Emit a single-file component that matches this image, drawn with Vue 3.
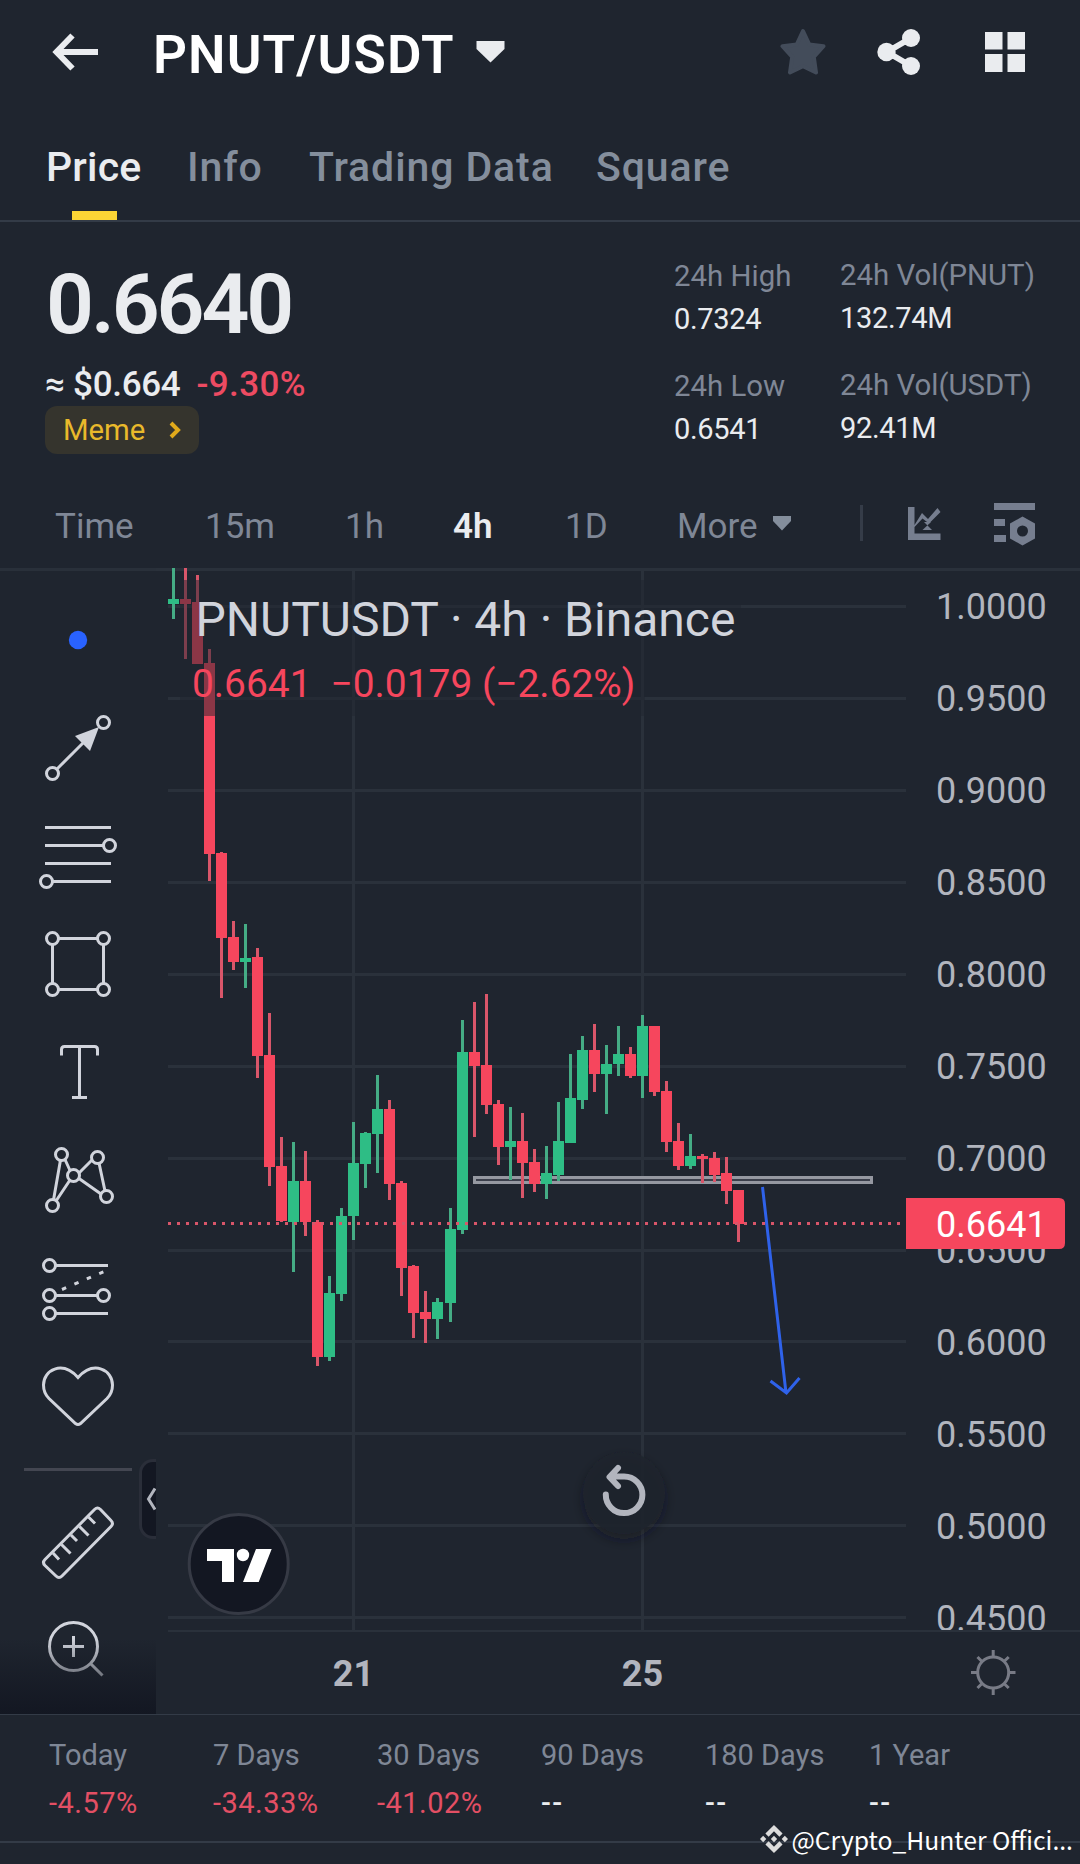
<template>
  <div class="page">
    <header class="header">
      <svg class="back" width="46" height="38" viewBox="0 0 46 38">
        <path d="M20.500 2.500L4.500 19L20.500 35.500M4 19H46" fill="none" stroke="#eaecef" stroke-width="6" />
      </svg>
      <h1 class="pair">PNUT/USDT</h1>
      <svg class="pair-caret" width="29" height="22" viewBox="0 0 29 22">
        <path d="M0.500 0H28.500V8L14.500 21.500L0.500 8Z" fill="#eaecef" />
      </svg>
      <div class="header-actions">
        <svg width="46" height="48" viewBox="0 0 46 48">
          <path
            d="M23 3L29.300 16.500L43.500 18.200L33.800 28.800L36 44.500L23 38.300L10 44.500L12.200 28.800L2.500 18.200L16.700 16.500Z"
            fill="#434c5a" stroke="#434c5a" stroke-width="4" stroke-linejoin="round"
          />
        </svg>
        <svg width="44" height="46" viewBox="0 0 44 46">
          <path d="M34 9L10 23L34 37" fill="none" stroke="#eaecef" stroke-width="6" />
          <circle cx="34" cy="9" r="9" fill="#eaecef" />
          <circle cx="9.500" cy="23" r="9.200" fill="#eaecef" />
          <circle cx="34" cy="37" r="9" fill="#eaecef" />
        </svg>
        <svg width="40" height="40" viewBox="0 0 40 40">
          <path d="M0 0H17.500V17.500H0ZM22.500 0H40V17.500H22.500ZM0 22H17.500V40H0ZM22.500 22H40V40H22.500Z" fill="#eaecef" />
        </svg>
      </div>
    </header>

    <nav class="tabs">
      <button
        v-for="tab in tabs"
        :key="tab"
        class="tab"
        :class="{ active: tab === activeTab }"
        @click="activeTab = tab"
      >
        {{ tab }}
      </button>
    </nav>

    <section class="quote">
      <div class="quote-main">
        <div class="last-price">0.6640</div>
        <div class="sub-price">
          <span class="fiat">≈ $0.664</span>
          <span class="change">-9.30%</span>
        </div>
        <div class="tag">
          Meme
          <svg width="12" height="18" viewBox="0 0 12 18">
            <path d="M2 2L9 9L2 16" fill="none" stroke="#e0a91b" stroke-width="4" />
          </svg>
        </div>
      </div>
      <div class="stats">
        <div v-for="stat in stats" :key="stat.label" class="stat">
          <div class="stat-label">{{ stat.label }}</div>
          <div class="stat-value">{{ stat.value }}</div>
        </div>
      </div>
    </section>

    <section class="intervals">
      <button
        v-for="item in intervals"
        :key="item"
        class="interval"
        :class="{ active: item === activeInterval }"
        @click="activeInterval = item"
      >
        {{ item }}
      </button>
      <div class="interval more">
        More
        <svg width="18" height="15" viewBox="0 0 18 15">
          <path d="M0 0H18V5L9 14.500L0 5Z" fill="#848e9c" />
        </svg>
      </div>
      <div class="divider"></div>
      <svg class="icon-chart" width="33" height="33" viewBox="0 0 33 33">
        <path d="M0 0H6.500V18L14 6L20 12L29.500 1L32.500 5L21 16.500L14.500 11.500L6.500 20V26.500H32.500V33H0Z" fill="#767e8f" />
        <path d="M16 15H23L14.500 23H24Z" fill="#767e8f" />
      </svg>
      <svg class="icon-config" width="41" height="43" viewBox="0 0 41 43">
        <path d="M0 0H41V7H0ZM0 16H11V23H0ZM0 32H12V39H0Z" fill="#767e8f" />
        <path
          d="M28.500 13.500L41 20.500V35.500L28.500 42.500L16 35.500V20.500ZM28.500 22.500A5.500 5.500 0 1 0 28.500 33.500A5.500 5.500 0 1 0 28.500 22.500Z"
          fill="#767e8f" fill-rule="evenodd"
        />
      </svg>
    </section>

    <section class="chart">
      <aside class="toolbar">
        <svg v-for="tool in tools" :key="tool.name" class="tool" viewBox="0 0 156 108">
          <circle v-if="tool.name === 'cursor'" cx="78" cy="54" r="9.200" fill="#2962ff" />
          <path v-if="tool.fill" :d="tool.fill" fill="#d1d4dc" />
          <path v-if="tool.path" :d="tool.path" class="stroke" />
          <path v-if="tool.dashed" :d="tool.dashed" class="stroke" stroke-dasharray="4.500 9" />
          <circle v-for="(dot, i) in tool.dots" :key="i" :cx="dot[0]" :cy="dot[1]" r="6" class="handle" />
        </svg>
        <div class="tool-separator"></div>
        <svg class="tool" viewBox="0 0 156 108">
          <path d="M94.500 20.500Q97.500 17.500 100.500 20.500L111 31.500Q114 34.500 111 37.500L62 87Q59 90 56 87L45 76.500Q42 73.500 45 70.500Z" class="stroke" />
          <path d="M53 64L59 70.500M61.500 55.500L70.500 64.500M71 46L77 52M79.500 37.500L88.500 46.500M88.500 28L95 34.500" class="stroke" />
        </svg>
        <svg class="tool" viewBox="0 0 156 108">
          <circle cx="73.500" cy="49.500" r="24" class="stroke" />
          <path d="M63 49.500H84M73.500 39V60M91 67L102.500 78.500" class="stroke" />
        </svg>
        <div class="toolbar-fade"></div>
        <div class="collapse">
          <svg width="13" height="24" viewBox="0 0 13 24">
            <path d="M12 1.500L5.500 12L12 22.500" fill="none" stroke="#b2b5be" stroke-width="3" />
          </svg>
        </div>
      </aside>

      <svg class="canvas" width="924" height="1146" viewBox="156 568 924 1146">
        <defs>
          <clipPath id="scale-clip"><rect x="906" y="568" width="174" height="1062" /></clipPath>
          <filter id="reset-shadow" x="-50%" y="-50%" width="200%" height="200%">
            <feDropShadow dx="0" dy="6" stdDeviation="6" flood-color="#10131c" flood-opacity="0.5" />
          </filter>
        </defs>

        <rect x="156" y="568" width="924" height="3" class="grid" />
        <rect v-for="row in priceRows" :key="row.label" x="168" :y="Math.round(row.y) - 1" width="738" height="3" class="grid" />
        <rect x="352" y="568" width="3" height="1063" class="grid" />
        <rect x="641" y="568" width="3" height="1063" class="grid" />
        <rect x="168" y="1630" width="912" height="2" class="grid" />

        <rect x="474.500" y="1177.500" width="397" height="5" fill="#3b3f4b" stroke="#9598a1" stroke-width="3" />

        <g v-for="(c, i) in candles" :key="i" :class="c[0]">
          <rect :x="candleX(i) + 4" :y="c[1]" width="3" :height="c[4] - c[1]" class="wick" />
          <rect :x="candleX(i)" :y="c[2]" width="11" :height="c[3] - c[2]" class="body" />
        </g>

        <path d="M168 1223.500H906" stroke="#d9566a" stroke-width="3" stroke-dasharray="3 6" />

        <path d="M762.500 1187L786 1393M770.500 1381L786.500 1393L799.500 1378" fill="none" stroke="#2f62ea" stroke-width="3" />

        <!-- legend sits on a translucent plate so candles stay visible -->
        <path d="M180 580H741V648H645V716H180Z" fill="#1f252f" fill-opacity="0.500" />
        <text x="195.500" y="636" class="legend-title">PNUTUSDT · 4h · Binance</text>
        <text x="192" y="697" class="legend-value">0.6641</text>
        <text x="330.500" y="697" class="legend-value">−0.0179 (−2.62%)</text>

        <circle cx="624" cy="1493" r="41" fill="#1f232e" fill-opacity="0.900" filter="url(#reset-shadow)" />
        <path
          d="M605.800 1494.500A18.300 18.300 0 1 0 624 1476.500H611M618 1468L609.500 1477L618 1486"
          fill="none" stroke="#b2b5be" stroke-width="6" stroke-linecap="round" stroke-linejoin="round"
        />

        <circle cx="238.700" cy="1564" r="49.500" fill="#131722" stroke="#363a45" stroke-width="3" />
        <path d="M207 1549H234V1582H222V1561H207ZM256 1549H271.700L258.700 1582H243Z" fill="#fff" />
        <circle cx="243" cy="1555" r="6.200" fill="#fff" />

        <g clip-path="url(#scale-clip)">
          <text v-for="row in priceRows" :key="row.label" x="936" :y="row.y + 13.4" class="scale">{{ row.label }}</text>
        </g>
        <path d="M906 1198H1059Q1065 1198 1065 1204V1243Q1065 1249 1059 1249H906Z" fill="#f6465d" />
        <text x="936" y="1237" class="scale current">0.6641</text>

        <text x="353.500" y="1686" class="scale date">21</text>
        <text x="642.500" y="1686" class="scale date">25</text>

        <g fill="none" stroke="#787b86" stroke-width="3">
          <circle cx="993.200" cy="1672.500" r="15.500" />
          <path d="M993.200 1657V1650M993.200 1688V1695M977.700 1672.500H971M1008.700 1672.500H1015.500M982 1661.500L977.500 1657M1004 1661.500L1008.700 1657M982 1683.500L977.500 1688M1004 1683.500L1008.700 1688" />
        </g>
      </svg>
    </section>

    <section class="performance">
      <div v-for="item in performance" :key="item.label" class="perf">
        <div class="perf-label">{{ item.label }}</div>
        <div class="perf-value" :class="item.value === '--' ? 'empty' : 'down'">{{ item.value }}</div>
      </div>
    </section>

    <div class="watermark">
      <svg width="28" height="28" viewBox="0 0 24 24">
        <path
          d="M16.624 13.920l2.718 2.716-7.353 7.353-7.353-7.352 2.718-2.717 4.635 4.660 4.636-4.660zM21.260 9.284L24 12l-2.715 2.716L18.568 12zM11.988 9.300l2.700 2.677-2.700 2.717L9.290 12zM2.716 9.284L5.409 12l-2.692 2.692L0 12zM11.988.012l7.353 7.329-2.717 2.715-4.636-4.636-4.635 4.660-2.718-2.716z"
          fill="#dcdcdc"
        />
      </svg>
      <span>@Crypto_Hunter Offici...</span>
    </div>
  </div>
</template>

<script setup>
import { ref } from 'vue'

const tabs = ['Price', 'Info', 'Trading Data', 'Square']
const activeTab = ref('Price')

const intervals = ['Time', '15m', '1h', '4h', '1D']
const activeInterval = ref('4h')

const stats = [
  { label: '24h High', value: '0.7324' },
  { label: '24h Vol(PNUT)', value: '132.74M' },
  { label: '24h Low', value: '0.6541' },
  { label: '24h Vol(USDT)', value: '92.41M' }
]

const performance = [
  { label: 'Today', value: '-4.57%' },
  { label: '7 Days', value: '-34.33%' },
  { label: '30 Days', value: '-41.02%' },
  { label: '90 Days', value: '--' },
  { label: '180 Days', value: '--' },
  { label: '1 Year', value: '--' }
]

const tools = [
  { name: 'cursor' },
  {
    name: 'trend',
    path: 'M57 75L84 48',
    fill: 'M99 33L75 42L90 57Z',
    dots: [[52.5, 79.5], [103.5, 28.5]]
  },
  {
    name: 'fib',
    path: 'M45 25.5H111M45 43.5H104M45 61.5H111M52 79.5H111',
    dots: [[109.5, 43.5], [46.5, 79.5]]
  },
  {
    name: 'shape',
    path: 'M58 28.5H98M58 79.5H98M52.5 34V74M103.5 34V74',
    dots: [[52.5, 28.5], [103.5, 28.5], [52.5, 79.5], [103.5, 79.5]]
  },
  {
    name: 'text',
    path: 'M61.5 37.5V31.5Q61.5 28.5 64.5 28.5H94.5Q97.5 28.5 97.5 31.5V37.5M79.500 28.5V79.5M72 79.5H87'
  },
  {
    name: 'pattern',
    path: 'M60.500 34L53.500 74M65 33.500L70 44.500M70 54L56 75M79 47L92 34M99 37L105 65M79 52.500L101 68',
    dots: [[61.5, 28.5], [97.5, 31.5], [73.5, 49.5], [52.5, 79.5], [106.5, 70.5]]
  },
  {
    name: 'forecast',
    path: 'M55 31.5H108M55 61.5H98M55 79.5H108',
    dashed: 'M62 55.500L104 37.500',
    dots: [[49.5, 31.5], [49.5, 61.5], [103.5, 61.5], [49.5, 79.5]]
  },
  {
    name: 'icons',
    path: 'M78 35.500C62 18 43.500 28 43.500 43C43.500 48.500 45 52.500 49 56.500L75.500 81.500Q78 83.500 80.500 81.500L107 56.500C111 52.500 112.500 48.500 112.500 43C112.500 28 94 18 78 35.500Z'
  }
]

// price scale, one label every 92px
const priceRows = Array.from({ length: 12 }, (_, i) => ({
  label: (1 - i * 0.05).toFixed(4),
  y: 606 + i * 91.93
}))

// direction, high, body top, body bottom, low
const candles = [
  ['up', 568, 599, 604, 619],
  ['down', 568, 599, 604, 659],
  ['down', 575, 602, 664, 664],
  ['down', 649, 663, 854, 881],
  ['down', 852, 853, 938, 998],
  ['down', 921, 937, 962, 970],
  ['up', 924, 958, 962, 988],
  ['down', 948, 957, 1056, 1078],
  ['down', 1013, 1055, 1167, 1186],
  ['down', 1137, 1166, 1221, 1222],
  ['up', 1142, 1181, 1222, 1272],
  ['down', 1151, 1181, 1222, 1236],
  ['down', 1220, 1222, 1357, 1366],
  ['up', 1276, 1293, 1357, 1361],
  ['up', 1208, 1216, 1294, 1301],
  ['up', 1122, 1163, 1216, 1240],
  ['up', 1132, 1133, 1164, 1188],
  ['up', 1075, 1109, 1134, 1173],
  ['down', 1100, 1109, 1184, 1200],
  ['down', 1181, 1183, 1268, 1296],
  ['down', 1265, 1266, 1313, 1338],
  ['down', 1291, 1312, 1319, 1343],
  ['up', 1298, 1302, 1319, 1339],
  ['up', 1208, 1229, 1303, 1322],
  ['up', 1020, 1052, 1230, 1234],
  ['down', 1002, 1052, 1066, 1137],
  ['down', 994, 1065, 1105, 1114],
  ['down', 1100, 1104, 1147, 1165],
  ['up', 1107, 1141, 1147, 1180],
  ['down', 1113, 1141, 1163, 1198],
  ['down', 1149, 1162, 1184, 1192],
  ['up', 1146, 1173, 1184, 1199],
  ['up', 1102, 1141, 1175, 1181],
  ['up', 1054, 1098, 1143, 1143],
  ['up', 1036, 1050, 1100, 1109],
  ['down', 1024, 1050, 1074, 1092],
  ['up', 1045, 1064, 1074, 1114],
  ['up', 1026, 1054, 1064, 1076],
  ['down', 1047, 1054, 1076, 1078],
  ['up', 1015, 1026, 1076, 1098],
  ['down', 1026, 1026, 1092, 1096],
  ['down', 1081, 1091, 1142, 1152],
  ['down', 1123, 1141, 1166, 1170],
  ['up', 1134, 1156, 1166, 1169],
  ['down', 1154, 1156, 1159, 1183],
  ['down', 1152, 1158, 1175, 1182],
  ['down', 1157, 1173, 1191, 1204],
  ['down', 1190, 1190, 1224, 1242]
]

const candleX = (i) => 168 + i * 12 + (i > 22 ? 1 : 0)
</script>

<style>
body {
  background: #1f252f;
}
</style>

<style scoped>
.page {
  position: relative;
  width: 1080px;
  height: 1864px;
  overflow: hidden;
  background: #1f252f;
  color: #eaecef;
  font-family: Roboto, "Liberation Sans", sans-serif;
}

svg {
  display: block;
  flex: none;
}

button {
  padding: 0;
  border: none;
  background: none;
  font: inherit;
  color: inherit;
  cursor: pointer;
}

.header {
  display: flex;
  align-items: center;
  height: 104px;
  padding: 0 55px 0 52px;
  box-sizing: border-box;
}

.pair {
  width: 323px;
  margin: 0;
  padding: 6px 0 0 55px;
  box-sizing: content-box;
  font-size: 53px;
  font-weight: 600;
  line-height: 60px;
  letter-spacing: 1.1px;
  color: #fff;
  white-space: nowrap;
}

.header-actions {
  display: flex;
  align-items: center;
  margin-left: auto;
}

.header-actions svg + svg {
  margin-left: 51px;
}

.header-actions svg:last-child {
  margin-left: 64px;
}

.tabs {
  display: grid;
  grid-template-columns: 141px 122px 287px auto;
  justify-items: start;
  height: 118px;
  padding: 0 46px;
  box-sizing: border-box;
  border-bottom: 2px solid #333b47;
}

.tab {
  position: relative;
  height: 116px;
  padding-top: 10px;
  font-size: 41px;
  font-weight: 500;
  letter-spacing: 0.9px;
  color: #848e9c;
  white-space: nowrap;
}

.tab.active {
  letter-spacing: 0.2px;
  color: #eaecef;
}

.tab.active::after {
  content: "";
  position: absolute;
  left: 50%;
  bottom: 0;
  width: 45px;
  height: 9px;
  margin-left: -22px;
  background: #fcd535;
}

.quote {
  display: flex;
  justify-content: space-between;
  height: 246px;
}

.quote-main {
  padding: 41px 0 0 45px;
}

.last-price {
  padding-left: 1px;
  font-size: 84px;
  font-weight: 600;
  line-height: 84px;
  letter-spacing: -3.1px;
}

.sub-price {
  display: flex;
  gap: 16px;
  height: 45px;
  margin-top: 14px;
  font-size: 35px;
  font-weight: 500;
  line-height: 47px;
}

.fiat {
  letter-spacing: -0.3px;
}

.change {
  letter-spacing: 0.4px;
  color: #ed4b62;
}

.tag {
  display: flex;
  align-items: center;
  justify-content: space-between;
  width: 154px;
  height: 48px;
  padding: 0 18px 0 18px;
  box-sizing: border-box;
  border-radius: 12px;
  background: #35342d;
  color: #e9b92b;
  font-size: 29.3px;
}

.stats {
  display: grid;
  grid-template-columns: 166px 240px;
  grid-auto-rows: 86px;
  row-gap: 24px;
  padding-top: 33px;
}

.stat:nth-child(even) {
  margin-top: -1px;
}

.stat-label,
.stat-value {
  font-size: 29.4px;
  line-height: 43px;
  white-space: nowrap;
}

.stat-label {
  color: #7f8796;
}

.stat-value {
  font-size: 29px;
  letter-spacing: -0.3px;
}

.intervals {
  display: grid;
  grid-template-columns: 150px 140px 108px 112px 112px 183px 48px 86px 1fr;
  align-items: center;
  height: 100px;
  padding: 0 0 0 55px;
}

.interval {
  padding-top: 16px;
  font-size: 35px;
  text-align: left;
  color: #7f8796;
}

.interval.active {
  color: #eaecef;
  font-weight: 600;
}

.more {
  display: flex;
  align-items: center;
  gap: 15px;
}

.more svg {
  margin-top: -6px;
}

.divider {
  width: 3px;
  height: 36px;
  margin-top: 10px;
  background: #353c48;
}

.icon-chart {
  margin-top: 10px;
}

.icon-config {
  margin-top: 13px;
}

.chart {
  display: flex;
  height: 1146px;
}

.toolbar {
  position: relative;
  width: 156px;
  padding-top: 15px;
  box-sizing: border-box;
  border-top: 3px solid #29303a;
}

.tool {
  width: 156px;
  height: 108px;
}

.stroke,
.handle {
  fill: none;
  stroke: #d1d4dc;
  stroke-width: 3px;
}

.tool-separator {
  width: 108px;
  height: 3px;
  margin: 18px 0 18px 24px;
  background: #434651;
}

.toolbar-fade {
  position: absolute;
  left: 0;
  bottom: 0;
  width: 156px;
  height: 76px;
  background: linear-gradient(rgba(19, 23, 34, 0), #131722);
}

.collapse {
  position: absolute;
  top: 888px;
  right: 0;
  display: flex;
  align-items: center;
  justify-content: flex-end;
  width: 17px;
  height: 80px;
  box-sizing: border-box;
  overflow: hidden;
  border: 3px solid #2a2e39;
  border-right: none;
  border-radius: 14px 0 0 14px;
  background: #131722;
}

.grid {
  fill: #2a313b;
}

.up .body {
  fill: #2ebd85;
}

.up .wick {
  fill: #45ac85;
}

.down .body {
  fill: #f6465d;
}

.down .wick {
  fill: #d9566a;
}

.legend-title {
  font-size: 48px;
  fill: #d1d4dc;
}

.legend-value {
  font-size: 38.9px;
  fill: #f6465d;
}

.scale {
  font-size: 36px;
  fill: #b2b5be;
}

.current {
  fill: #fff;
}

.date {
  font-weight: 700;
  text-anchor: middle;
}

.performance {
  display: grid;
  grid-template-columns: repeat(6, 164px);
  height: 129px;
  padding: 16px 0 0 49px;
  box-sizing: border-box;
  border-top: 1px solid #333b47;
  border-bottom: 2px solid #333b47;
}

.perf-label,
.perf-value {
  font-size: 29px;
  line-height: 48px;
}

.perf-label {
  color: #7f8796;
}

.perf-value.down {
  letter-spacing: 0.5px;
  color: #e34f64;
}

.perf-value.empty {
  font-weight: 500;
  letter-spacing: 1.5px;
}

.watermark {
  position: absolute;
  right: 7px;
  bottom: 7px;
  display: flex;
  align-items: center;
  gap: 4px;
  font-family: "Noto Sans CJK SC", sans-serif;
  font-size: 24.7px;
  line-height: 36px;
  color: #fff;
}
</style>
